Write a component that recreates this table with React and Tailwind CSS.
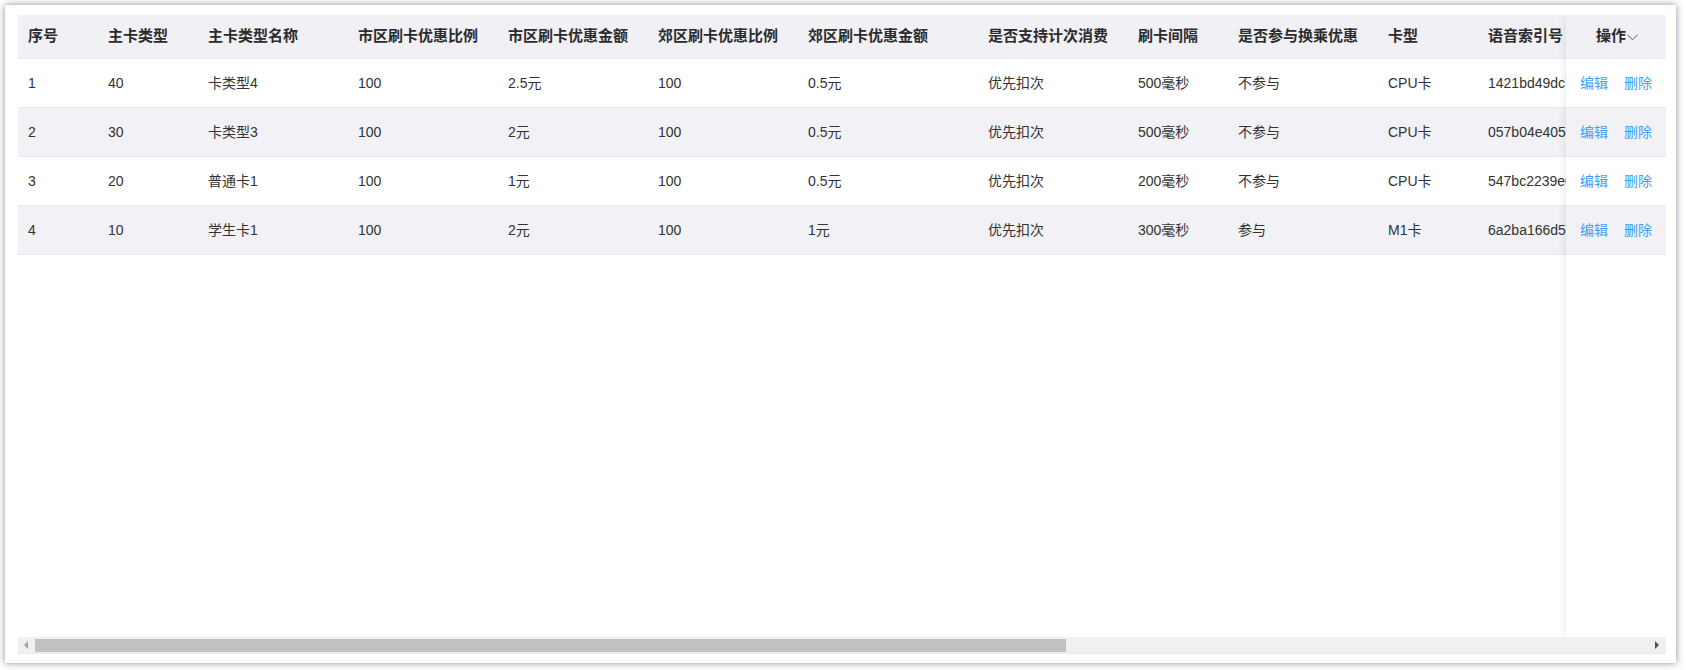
import React from "react";

const cols = [
  { t: "序号", w: "w-[80px]" },
  { t: "主卡类型", w: "w-[100px]" },
  { t: "主卡类型名称", w: "w-[150px]" },
  { t: "市区刷卡优惠比例", w: "w-[150px]" },
  { t: "市区刷卡优惠金额", w: "w-[150px]" },
  { t: "郊区刷卡优惠比例", w: "w-[150px]" },
  { t: "郊区刷卡优惠金额", w: "w-[180px]" },
  { t: "是否支持计次消费", w: "w-[150px]" },
  { t: "刷卡间隔", w: "w-[100px]" },
  { t: "是否参与换乘优惠", w: "w-[150px]" },
  { t: "卡型", w: "w-[100px]" },
  { t: "语音索引号", w: "w-[88px]" },
];

const rows = [
  ["1", "40", "卡类型4", "100", "2.5元", "100", "0.5元", "优先扣次", "500毫秒", "不参与", "CPU卡", "1421bd49dc7e4a2b"],
  ["2", "30", "卡类型3", "100", "2元", "100", "0.5元", "优先扣次", "500毫秒", "不参与", "CPU卡", "057b04e4059c4d1e"],
  ["3", "20", "普通卡1", "100", "1元", "100", "0.5元", "优先扣次", "200毫秒", "不参与", "CPU卡", "547bc2239e0f4b6a"],
  ["4", "10", "学生卡1", "100", "2元", "100", "1元", "优先扣次", "300毫秒", "参与", "M1卡", "6a2ba166d5e84c3f"],
];

const font = { fontFamily: '"Liberation Sans", Arial, "Noto Sans CJK SC", sans-serif' };

function ScrollBar() {
  return (
    <div className="h-[17px] flex bg-[#f0f0f0] border-b border-[#e6e8f2]">
      <div className="w-[17px] h-full flex items-center justify-center">
        <svg width="5" height="8" viewBox="0 0 5 8">
          <polygon points="4,0 4,8 0,4" fill="#a3a3a3" />
        </svg>
      </div>
      <div className="flex-1 pt-[2px]">
        <div className="h-[13px] w-[1031px] bg-[#c1c1c1]" />
      </div>
      <div className="w-[17px] h-full flex items-center justify-center">
        <svg width="5" height="8" viewBox="0 0 5 8">
          <polygon points="0,0 0,8 4,4" fill="#505050" />
        </svg>
      </div>
    </div>
  );
}

export default function App() {
  return (
    <div className="w-[1686px] h-[670px] bg-white pt-[5px] pl-[5px] pr-[10px] text-[14px] text-[#333]" style={font}>
      <div className="h-[658px] bg-white shadow-[0_0_7px_rgba(50,65,85,0.6)] pl-[13px] pr-[10px] pt-[10px] pb-[9px] flex flex-col">
        <div className="relative flex-1 flex flex-col">
          <div className="h-[622px] overflow-hidden flex">
            <div className="flex-1 min-w-0 overflow-hidden">
              <div className="flex h-[44px] bg-[#f0f0f5] border-b border-[#e6e8f2] font-bold text-[15px] text-[#2b2b2b]">
                {cols.map((c, i) => (
                  <div key={i} className={`${c.w} shrink-0 pl-[10px] flex items-center whitespace-nowrap overflow-hidden`}>
                    {c.t}
                  </div>
                ))}
              </div>
              {rows.map((r, ri) => (
                <div
                  key={ri}
                  className={`flex h-[49px] border-b border-[#e6e8f2] ${ri % 2 === 1 ? "bg-[#f1f1f6]" : "bg-white"}`}
                >
                  {r.map((v, ci) => (
                    <div key={ci} className={`${cols[ci].w} shrink-0 pl-[10px] flex items-center whitespace-nowrap overflow-hidden`}>
                      {v}
                    </div>
                  ))}
                </div>
              ))}
            </div>
            <div className="w-[100px] shrink-0 h-full bg-white shadow-[0_0_10px_rgba(0,0,0,0.1)] flex flex-col relative">
              <div className="h-[44px] bg-[#f0f0f5] border-b border-[#e6e8f2] font-bold text-[15px] text-[#2b2b2b] flex items-center justify-center pl-[2px]">
                <span>操作</span>
                <svg width="11" height="7" viewBox="0 0 11 7" className="ml-[1px] mt-[1px]">
                  <polyline points="0.5,0.8 5.5,5.8 10.5,0.8" fill="none" stroke="#555" strokeWidth="1" />
                </svg>
              </div>
              {rows.map((r, ri) => (
                <div
                  key={ri}
                  className={`h-[49px] border-b border-[#e6e8f2] flex items-center pl-[14px] gap-4 text-[#409eff] ${ri % 2 === 1 ? "bg-[#f1f1f6]" : "bg-white"}`}
                >
                  <span>编辑</span>
                  <span>删除</span>
                </div>
              ))}
            </div>
          </div>
          <ScrollBar />
        </div>
      </div>
    </div>
  );
}
